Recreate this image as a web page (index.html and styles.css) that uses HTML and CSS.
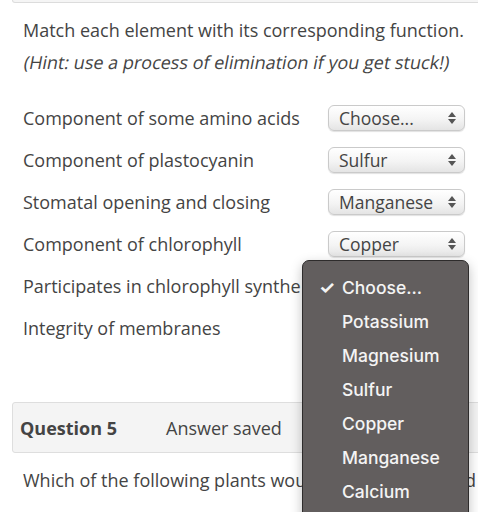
FILE: index.html
```html
<!DOCTYPE html>
<html>
<head>
<meta charset="utf-8">
<link rel="stylesheet" href="styles.css">
</head>
<body>
<div class="prev-box"></div>
<div class="qtext">
  <p class="prompt">Match each element with its corresponding function.</p>
  <p class="hint"><span class="slant">(Hint: use a process of elimination if you get stuck!)</span></p>
</div>
<div class="rows">
  <div class="row"><span class="label">Component of some amino acids</span><span class="select">Choose...<span class="arrows"></span></span></div>
  <div class="row"><span class="label">Component of plastocyanin</span><span class="select">Sulfur<span class="arrows"></span></span></div>
  <div class="row"><span class="label">Stomatal opening and closing</span><span class="select">Manganese<span class="arrows"></span></span></div>
  <div class="row"><span class="label">Component of chlorophyll</span><span class="select">Copper<span class="arrows"></span></span></div>
  <div class="row"><span class="label">Participates in chlorophyll synthe</span></div>
  <div class="row"><span class="label">Integrity of membranes</span></div>
</div>
<div class="qheader">
  <span class="qno">Question 5</span>
  <span class="qstate">Answer saved</span>
</div>
<p class="next"><span class="lead">Which of the following plants wou</span><span class="tail">d</span></p>

<div class="menu">
  <div class="item checked"><span class="check">✓</span>Choose...</div>
  <div class="item">Potassium</div>
  <div class="item">Magnesium</div>
  <div class="item">Sulfur</div>
  <div class="item">Copper</div>
  <div class="item">Manganese</div>
  <div class="item">Calcium</div>
</div>
</body>
</html>
```
FILE: styles.css
```css
html, body {
  margin: 0;
  padding: 0;
  background: #fff;
  overflow: hidden;
  width: 478px;
  height: 512px;
}
body {
  font-family: "Open Sans", sans-serif;
  color: #444;
  font-size: 18px;
  position: relative;
}
.prev-box {
  margin-left: 12px;
  margin-right: -20px;
  height: 2px;
  background: #f5f5f5;
  border: 1px solid #dcdcdc;
  border-top: none;
  border-bottom-left-radius: 4px;
}
.qtext {
  padding-left: 23px;
  padding-top: 11px;
}
.qtext p {
  margin: 0;
  line-height: 32px;
  white-space: nowrap;
}
.slant {
  display: inline-block;
  transform: skewX(-11deg);
  transform-origin: 0 70%;
}
.rows {
  padding-left: 23px;
  margin-top: 19px;
}
.row {
  height: 42px;
  display: flex;
  align-items: center;
  white-space: nowrap;
}
.label {
  width: 305px;
  flex: none;
}
.select {
  flex: none;
  position: relative;
  box-sizing: border-box;
  width: 137px;
  height: 26px;
  line-height: 24px;
  padding-left: 10px;
  border: 1px solid #cacaca;
  border-radius: 6px;
  background: linear-gradient(#ffffff, #f4f4f4 55%, #e4e4e4);
  box-shadow: 0 1px 1px rgba(0,0,0,0.12);
  color: #444;
  font-size: 17.5px;
}
.arrows {
  position: absolute;
  right: 8px;
  top: 6px;
  width: 0;
  height: 0;
  border-left: 4px solid transparent;
  border-right: 4px solid transparent;
  border-bottom: 5px solid #555;
}
.arrows::after {
  content: "";
  position: absolute;
  left: -4px;
  top: 7px;
  border-left: 4px solid transparent;
  border-right: 4px solid transparent;
  border-top: 5px solid #555;
}
.qheader {
  margin-top: 53px;
  margin-left: 12px;
  margin-right: -20px;
  height: 49px;
  background: #f4f4f4;
  border: 1px solid #dedede;
  border-radius: 3px;
  display: flex;
  align-items: center;
  white-space: nowrap;
}
.qno {
  font-weight: 700;
  padding-left: 7px;
  width: 146px;
  flex: none;
}
.next {
  margin: 0;
  padding-left: 23px;
  line-height: 54px;
  white-space: nowrap;
  display: flex;
}
.tail {
  margin-left: auto;
  padding-right: 2px;
}
.menu {
  position: absolute;
  left: 302px;
  top: 260px;
  width: 167px;
  height: 280px;
  box-sizing: border-box;
  background: #625e5e;
  border: 1px solid #2e2c2c;
  border-radius: 7px;
  padding-top: 10px;
  box-shadow: 0 4px 12px rgba(0,0,0,0.25);
  font-family: "Inter", "Liberation Sans", sans-serif;
  font-weight: 500;
  font-size: 17.5px;
  color: #f4f4f4;
}
.item {
  position: relative;
  height: 34px;
  line-height: 34px;
  padding-left: 39px;
  white-space: nowrap;
}
.check {
  position: absolute;
  left: 16px;
  top: 0;
  font-size: 18px;
  font-weight: 700;
}
```
